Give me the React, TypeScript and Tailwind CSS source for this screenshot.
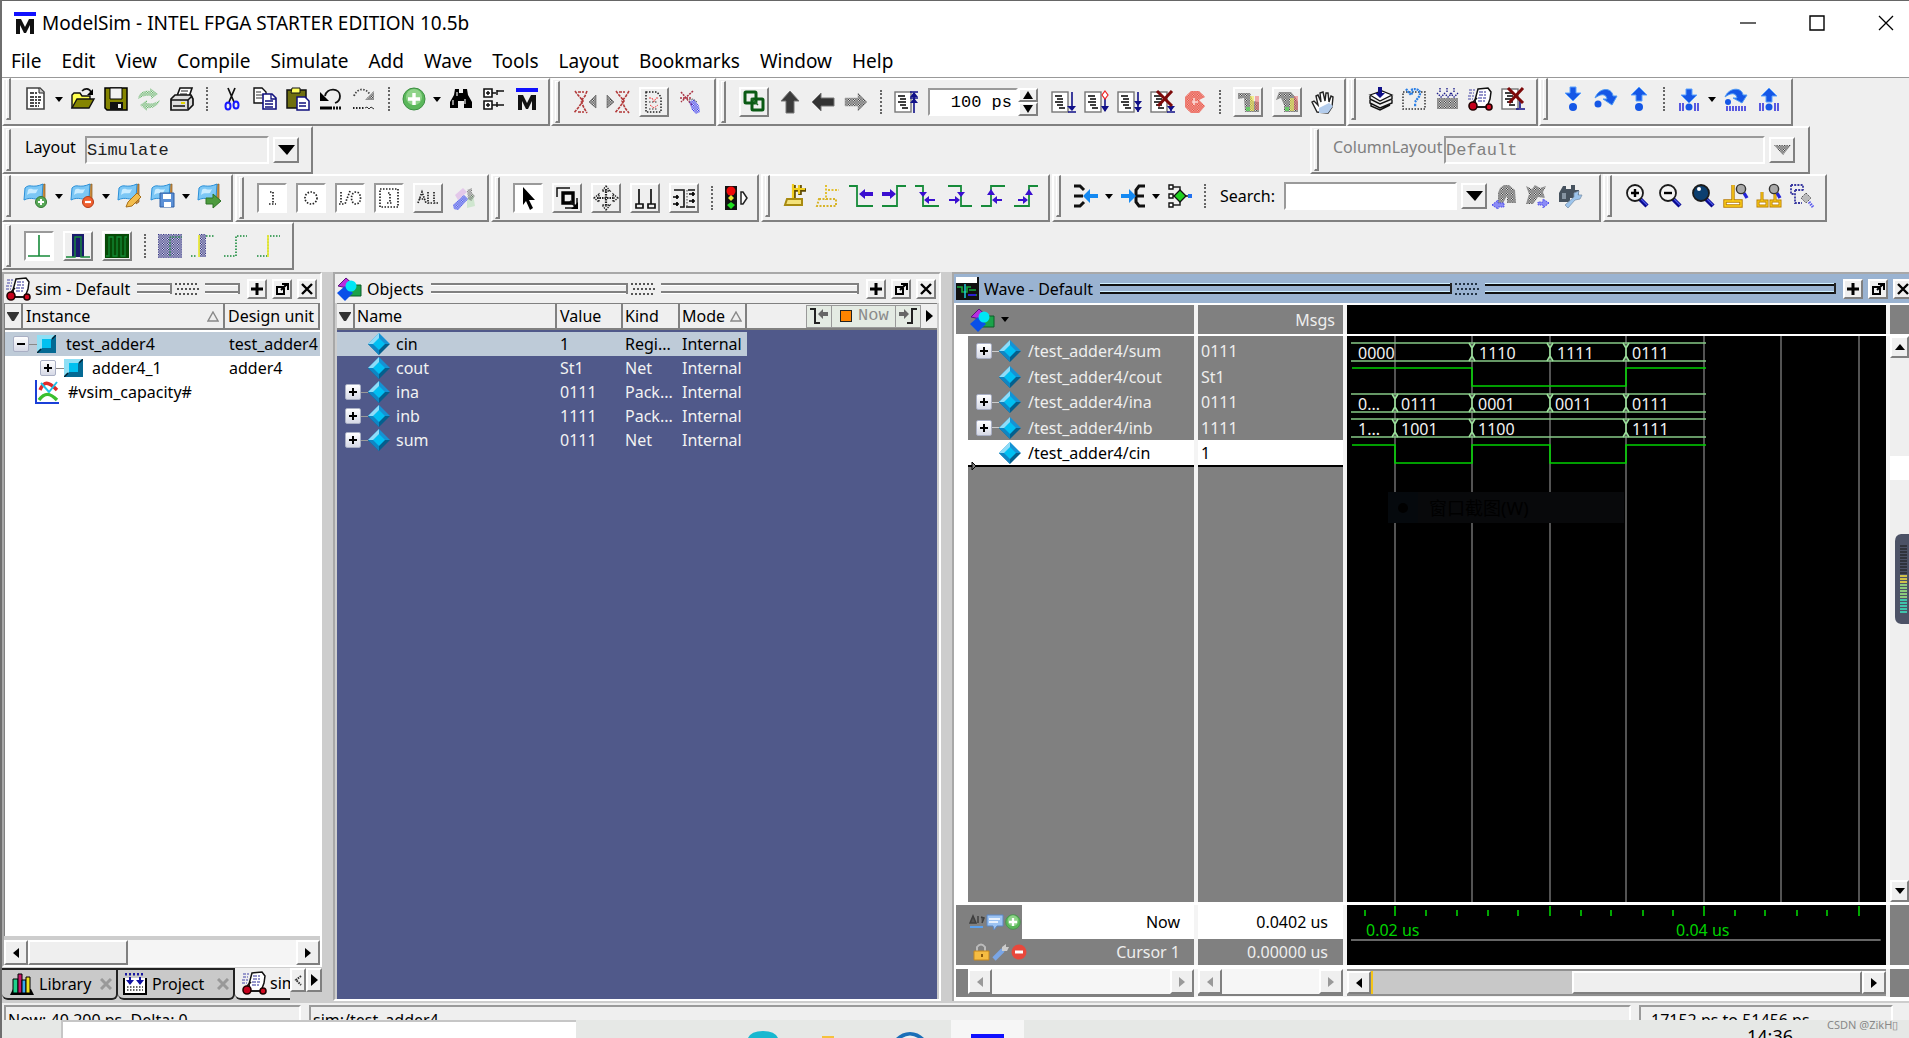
import type { ReactNode } from "react";

const SANS = "font-['Noto_Sans','Noto_Sans_CJK_SC',sans-serif]";
const MONO = "font-['Liberation_Mono',monospace]";
const RAISED = "border-t-2 border-l-2 border-r-2 border-b-2 border-t-white border-l-white border-r-[#808080] border-b-[#808080] bg-[#efefef]";
const SUNKEN = "border-t-2 border-l-2 border-r-2 border-b-2 border-t-[#9a9a9a] border-l-[#9a9a9a] border-r-white border-b-white";

const MENUS = ["File", "Edit", "View", "Compile", "Simulate", "Add", "Wave", "Tools", "Layout", "Bookmarks", "Window", "Help"];

// "|" separator, "v" drop arrow, "[" raised button, "(" pressed button
const BAR_STD = ["new", "v", "open", "save", "refresh", "print", "|", "cut", "copy", "paste", "undo", "redo", "|", "add", "v", "find", "tree", "logo"];
const BAR_EXCL = ["exclLeft", "exclRight", "[exclEdit", "exclClear"];
const BAR_RUN_A = ["[link", "up", "left", "right", "|", "restart"];
const BAR_RUN_B = ["run", "runCont", "runAll", "breakRun", "stop", "|", "[perf", "[mem", "hand"];
const BAR_COMPILE = ["compile", "compileOut", "compileAll", "simulate", "endSim"];
const BAR_STEP = ["stepIn", "stepOver", "stepOut", "|", "stepInC", "v", "stepOverC", "stepOutC"];
const BAR_BOOK = ["bookAdd", "v", "bookDel", "v", "bookEdit", "bookSave", "v", "bookGo"];
const BAR_FILTER = ["(fIn", "(fOut", "(fInOut", "(fInt", "[fAll", "fWrench"];
const BAR_MODE = ["(select", "[zoomMode", "[pan", "[twoCursor", "[edit", "|", "traffic"];
const BAR_CURSOR = ["curAdd", "curDel", "prevTrans", "nextTrans", "prevFall", "nextFall", "prevRise", "nextRise"];
const BAR_EXPAND = ["expandIn", "v", "expandOut", "v", "expandNet", "|"];
const BAR_SEARCH = ["findPrev", "findNext", "findOpts"];
const BAR_ZOOM = ["zoomIn", "zoomOut", "zoomFull", "zoomCur", "zoomTwo", "zoomSel"];
const BAR_DELTA = ["(dOff", "[dOne", "[dAll", "|", "dBlock", "dMid", "dRise", "dEdge"];

const OBJECTS = [
  { name: "cin", value: "1", kind: "Regi...", mode: "Internal", open: false, selected: true },
  { name: "cout", value: "St1", kind: "Net", mode: "Internal", open: false, selected: false },
  { name: "ina", value: "0111", kind: "Pack...", mode: "Internal", open: true, selected: false },
  { name: "inb", value: "1111", kind: "Pack...", mode: "Internal", open: true, selected: false },
  { name: "sum", value: "0111", kind: "Net", mode: "Internal", open: true, selected: false },
];

const SIGNALS = [
  { name: "/test_adder4/sum", value: "0111", bus: true },
  { name: "/test_adder4/cout", value: "St1", bus: false },
  { name: "/test_adder4/ina", value: "0111", bus: true },
  { name: "/test_adder4/inb", value: "1111", bus: true },
  { name: "/test_adder4/cin", value: "1", bus: false },
];

const GRID = [48, 125, 203, 279, 357, 434, 512];

const BUSES = [
  { y: 7, edges: [125, 203, 279], labels: [{ x: 11, t: "0000" }, { x: 132, t: "1110" }, { x: 210, t: "1111" }, { x: 285, t: "0111" }] },
  { y: 58, edges: [48, 125, 203, 279], labels: [{ x: 11, t: "0..." }, { x: 54, t: "0111" }, { x: 131, t: "0001" }, { x: 208, t: "0011" }, { x: 285, t: "0111" }] },
  { y: 83, edges: [48, 125, 279], labels: [{ x: 11, t: "1..." }, { x: 54, t: "1001" }, { x: 131, t: "1100" }, { x: 285, t: "1111" }] },
];

const MINOR = [18, 79, 110, 141, 171, 234, 264, 296, 326, 388, 418, 450, 480];

function Flag({ children }: { children?: ReactNode }) {
  return (
    <>
      <path d="M17 1 L21 0 L21 18 L18 20z" fill="#c98a3c" stroke="#8a5a1c" strokeWidth=".7" />
      <path d="M1 4 C6 -1 8 5 19 0 L18 14 C11 17 8 12 0 16z" fill="#7cc7f5" stroke="#2a8fd8" strokeWidth="1" />
      <path d="M4 6 C7 3 9 7 14 5 L12 9 C8 10 7 8 3 11z" fill="#c8ebff" />
      {children}
    </>
  );
}

function Doc() {
  return (
    <>
      <rect x="1" y="2" width="16" height="20" fill="#fff" stroke="#777" strokeWidth="1.4" />
      <path d="M4 6h7M6 9h6M4 12h8M6 15h6M8 18h6" stroke="#000" strokeWidth="1.6" />
    </>
  );
}

function Lens({ children, fill = "#f4f4f4" }: { children?: ReactNode; fill?: string }) {
  return (
    <>
      <path d="M15 15l7 7" stroke="#0a0a90" strokeWidth="4.4" />
      <path d="M16 15l6 6" stroke="#4a58e8" strokeWidth="1.2" />
      <circle cx="10" cy="9" r="8" fill={fill} stroke="#1b1b1b" strokeWidth="1.8" />
      {children}
    </>
  );
}

function Trolley() {
  return (
    <>
      <path d="M10 2l10-1 3 4-1 7-3 8H8L7 13z" fill="#fff" stroke="#111" strokeWidth="1.5" />
      <path d="M11 5h7M11 8h7M10 11h8M10 14h7" stroke="#7373b9" strokeWidth="1.4" strokeDasharray="4 1" />
      <path d="M1 3h6M1 6h5M0 9h6M0 12h5" stroke="#7d7dc0" strokeWidth="1.3" strokeDasharray="3 1" />
      <path d="M5 15l4-4M9 20h9" stroke="#111" strokeWidth="1.6" />
      <circle cx="5" cy="19" r="4" fill="#c4001c" stroke="#200" strokeWidth="1.6" />
      <circle cx="21" cy="20" r="3" fill="#d40a20" stroke="#200" strokeWidth="1.6" />
    </>
  );
}

const DOWN = "M9 2h6v6h5l-8 8-8-8h5z";
const BLUE = "#1557e6";

const ICONS: Record<string, ReactNode> = {
  new: <><path d="M3 1h13l4 4v17H3z" fill="#fff" stroke="#444" strokeWidth="1.6" /><path d="M15 1v5h5" fill="#ccc" stroke="#222" /><path d="M6 6h7M6 10h11M6 13h11M6 16h10M6 19h9" stroke="#111" strokeWidth="1.6" strokeDasharray="4 1 2 1" /></>,
  open: <><path d="M1 21V8l2-2h6l2 3h8v4" fill="#ffff50" stroke="#111" strokeWidth="1.4" /><path d="M1 21l5-9h17l-5 9z" fill="#858500" stroke="#111" strokeWidth="1.4" /><path d="M11 4c3-3 7-3 9 1" fill="none" stroke="#111" strokeWidth="1.6" /><path d="M22 2v6h-6z" /></>,
  save: <><path d="M1 1h22v22H3l-2-2z" fill="#858500" stroke="#000" strokeWidth="1.5" /><path d="M6 1h12v11H6z" fill="#f1f1f1" stroke="#000" /><path d="M6 15h13v8H6z" fill="#111" /><path d="M14 17h3v4h-3z" fill="#eee" /></>,
  refresh: <><path d="M1 12C2 5 8 3 13 4V1l8 6-7 5V9c-5-1-8 0-13 3z" fill="url(#ditherGreen)" /><path d="M23 13c-2 6-8 9-13 8v3l-7-6 7-5v3c5 1 8 0 13-3z" fill="url(#ditherGreen)" /></>,
  print: <><path d="M7 9L10 1h12l-3 9" fill="#fff" stroke="#111" strokeWidth="1.6" /><path d="M11 4h7M10 7h7" stroke="#222" /><path d="M1 12l4-4h16l2 4v6l-5 5H1z" fill="#ddd" stroke="#111" strokeWidth="1.7" /><path d="M1 13h17l4-4M18 13v9M3 19h12" fill="none" stroke="#111" strokeWidth="1.5" /><path d="M11 15h4v2h-4z" fill="#e5d800" /></>,
  cut: <><path d="M8 1l6 14M15 1L9 15" stroke="#111" strokeWidth="1.7" /><ellipse cx="8" cy="19" rx="2.5" ry="3.6" fill="none" stroke="#1818ff" strokeWidth="2" /><ellipse cx="16" cy="18" rx="2.5" ry="3.6" fill="none" stroke="#1818ff" strokeWidth="2" /></>,
  copy: <><path d="M1 1h8l4 4v11H1z" fill="#fff" stroke="#111" strokeWidth="1.4" /><path d="M3 5h5M3 8h7M3 11h6" stroke="#333" /><path d="M10 7h9l4 4v11H10z" fill="#fff" stroke="#10107e" strokeWidth="1.6" /><path d="M18 7v5h5M12 14h8M12 17h8M12 20h8" fill="none" stroke="#10107e" strokeWidth="1.3" /></>,
  paste: <><path d="M1 3h19v18H1z" fill="#6f6f10" stroke="#111" strokeWidth="1.5" /><path d="M6 1h8v5H5z" fill="#ffff60" stroke="#111" /><path d="M11 10h8l4 4v9H11z" fill="#fff" stroke="#10107e" strokeWidth="1.5" /><path d="M13 16h7M13 19h7" stroke="#10107e" strokeWidth="1.3" /></>,
  undo: <><path d="M6 9C8 0 21 1 21 9c0 4-2 6-5 7" fill="none" stroke="#111" strokeWidth="1.8" /><path d="M1 5v9h9z" /><path d="M1 21h12" stroke="#000" strokeWidth="3" /><path d="M14 21h8" stroke="#111" strokeWidth="3" strokeDasharray="2 1" /></>,
  redo: <><path d="M2 9C5 1 14 0 18 8" fill="none" stroke="#444" strokeWidth="1.8" strokeDasharray="1.5 1.5" /><path d="M22 4v9h-9z" fill="url(#ditherGray)" /><path d="M1 21h12" stroke="#222" strokeWidth="2" strokeDasharray="1.5 1.5" /><path d="M13 21l2-1 2 2 2-2 3 2" fill="none" stroke="#333" /></>,
  add: <><circle cx="12" cy="12" r="11" fill="#5bb75b" stroke="#3c8f42" /><circle cx="12" cy="10" r="8" fill="#8fd38a" /><path d="M12 6v12M6 12h12" stroke="#fff" strokeWidth="3.4" /></>,
  find: <><path d="M6 2h4v4h4V2h4l1 6 4 7v6h-8v-7h-6v7H1v-6l4-7z" /><path d="M4 13v5M16 12v5M8 5v4" stroke="#efefef" strokeWidth="1.2" /></>,
  tree: <><path d="M2 2h8v8H2zM2 14h8v8H2z" fill="#fff" stroke="#111" strokeWidth="1.6" /><path d="M6 4v4M4 6h4M6 16v4M4 18h4M10 6h4M15 3v5M15 4h7M10 18h5M15 15v5M15 18h7" stroke="#111" strokeWidth="1.5" /></>,
  logo: <><path d="M1 1h22v4H1z" fill="#1010ff" /><path d="M3 23V8h5l4 8 4-8h5v15h-4v-9l-4 8h-2l-4-8v9z" fill="#111" /></>,
  exclLeft: <><path d="M2 1l3 4 5 6-5 7-4 5M14 1l-2 5-4 5 3 7 3 5M5 2h6M5 22h6" fill="none" stroke="#b23a3a" strokeWidth="1.6" strokeDasharray="3 1" /><path d="M23 5v13l-7-6z" fill="url(#ditherGray)" stroke="#555" strokeWidth=".6" /></>,
  exclRight: <><path d="M10 1l3 4 5 6-5 7-4 5M23 1l-3 5-4 5 3 7 4 5M13 2h6M13 22h6" fill="none" stroke="#b23a3a" strokeWidth="1.6" strokeDasharray="3 1" /><path d="M1 5v13l7-6z" fill="url(#ditherGray)" stroke="#555" strokeWidth=".6" /></>,
  exclEdit: <><path d="M4 2h11l4 5v15H4z" fill="none" stroke="#222" strokeWidth="1.5" strokeDasharray="1.5 1.5" /><path d="M7 8h3l2 4 2-4h3M8 15l4 3 4-3" fill="none" stroke="#f04040" strokeDasharray="2 1" /><path d="M7 12h9M7 19h9" stroke="#333" strokeDasharray="1.5 1.5" /></>,
  exclClear: <><path d="M3 2l11 13M15 1L3 12M2 8h11" stroke="#a34" strokeWidth="1.5" strokeDasharray="2 1" /><path d="M11 12l5-3 5 7 1 6-4 2-4-4z" fill="url(#ditherBlue)" /><path d="M11 10l4-1 4 3" fill="none" stroke="#555" strokeDasharray="1.5 1" /></>,
  link: <><rect x="3" y="2" width="11" height="11" rx="1" fill="none" stroke="#0a5a14" strokeWidth="3" /><rect x="10" y="9" width="11" height="11" rx="1" fill="none" stroke="#0a5a14" strokeWidth="3" /><path d="M9 8l7 7" stroke="#1b6a24" strokeWidth="1.5" /></>,
  up: <path d="M12 1l9 10h-5v12H8V11H3z" fill="#3b3b3b" stroke="#777" />,
  left: <path d="M1 12l9-9v5h13v8H10v5z" fill="#333" stroke="#777" />,
  right: <path d="M23 12l-9-9v5H1v8h13v5z" fill="url(#ditherGray)" stroke="#999" strokeWidth=".5" />,
  restart: <><Doc /><path d="M16 2h8M16 8h8M20 3v20" stroke="#101088" strokeWidth="1.6" /><path d="M20 2l4 5h-8zM20 8l4 5h-8z" fill="#101088" /></>,
  run: <><Doc /><path d="M21 2v18M17 22h8" stroke="#101088" strokeWidth="1.6" /><path d="M16 16h9l-4 5z" fill="#101088" /></>,
  runCont: <><Doc /><path d="M21 9v12" stroke="#101088" strokeWidth="1.6" /><path d="M21 1l3 4-3 4-3-4z" fill="#fff" stroke="#e22" strokeWidth="1.2" /><path d="M17 16h8l-4 6z" fill="#101088" /></>,
  runAll: <><Doc /><path d="M21 2v20" stroke="#101088" strokeWidth="1.6" /><path d="M17 11h8l-4 5zM17 17h8l-4 5z" fill="#101088" /></>,
  breakRun: <><Doc /><path d="M21 14v7M17 22h8" stroke="#101088" strokeWidth="1.6" /><path d="M17 16h8l-4 5z" fill="#101088" /><path d="M7 1l15 15M22 1L8 16" stroke="#7d0a0a" strokeWidth="3" /></>,
  stop: <><path d="M8 1h8l6 6-6 3 6 6-6 7H8l-6-6V7z" fill="url(#ditherRed)" /><path d="M8 1h8l6 6-6 3 6 6-6 7H8l-6-6V7z" fill="#f0604f" opacity=".45" /><path d="M11 8v7M9 12h6" stroke="#fbdad6" strokeWidth="1.6" /></>,
  perf: <><path d="M2 3h12l3 8 6 1v10H9L8 8 2 9z" fill="url(#ditherGray)" /><path d="M14 6h4v15h-4z" fill="#f6ee50" opacity=".6" /><path d="M19 6h4v14h-4z" fill="#f06060" opacity=".5" /><path d="M10 17h4v4h-4z" fill="#58e058" opacity=".7" /></>,
  mem: <><path d="M1 10l3-8h12l5 6 2 4v10H9v-7L6 8z" fill="url(#ditherGray)" /><path d="M15 8h4v13h-4z" fill="#f6ee50" opacity=".6" /><path d="M19 6h4v14h-4z" fill="#f06060" opacity=".5" /><path d="M10 17h4v4h-4z" fill="#58e058" opacity=".7" /></>,
  hand: <><path d="M6 22L1 12l2-1 4 4-2-9 2-1 3 7-1-9 3-1 2 9 1-8 2 0 1 9 2-6 2 1-1 10-4 6z" fill="#fff" stroke="#222" strokeWidth="1.4" /><path d="M8 18l10-5 4 3-5 7H8z" fill="#b3ccec" /></>,
  compile: <><path d="M1 8l12-4 10 4-12 6z" fill="#fff" stroke="#111" strokeWidth="1.3" /><path d="M1 9v3l10 5 12-5V9M1 13v3l10 5 12-5v-3M2 17v2l9 4 10-5" fill="none" stroke="#111" strokeWidth="1.4" /><path d="M9 0h4v6h3l-5 5-5-5h3z" fill="#101088" /></>,
  compileOut: <><path d="M1 5h22v17H1z" fill="none" stroke="#333" strokeWidth="1.5" strokeDasharray="1.5 1.5" /><path d="M4 2l5 6 2-4M9 3c7-3 12 2 7 8l-3 4M12 18h3" fill="none" stroke="#2c80e6" strokeWidth="2.3" strokeDasharray="2 .8" /></>,
  compileAll: <><path d="M2 11h21v11H2z" fill="url(#ditherGray)" /><path d="M5 1v4M12 1v4M19 1v4M2 6l4 4 4-4M9 6l4 4 4-4M15 6l4 4 4-4" fill="none" stroke="#20208c" strokeWidth="1.4" strokeDasharray="1.5 1" /></>,
  simulate: <Trolley />,
  endSim: <><Doc /><path d="M19 14v7M15 22h9" stroke="#101088" strokeWidth="1.6" /><path d="M7 1l15 15M22 1L8 16" stroke="#7d0a0a" strokeWidth="3" /></>,
  stepIn: <><path d="M9 0h6v6h5l-8 8-8-8h5z" fill={BLUE} stroke="#5aa2ff" /><circle cx="12" cy="20" r="4" fill={BLUE} /></>,
  stepOver: <><path d="M1 11C5 0 18 0 19 9h4l-5 9-9-6h4c-1-6-7-5-12-1z" fill={BLUE} stroke="#4f9bf5" /><circle cx="4" cy="17" r="3.5" fill={BLUE} /></>,
  stepOut: <><path d="M12 0l8 8h-5v6H9V8H4z" fill={BLUE} stroke="#5aa2ff" /><circle cx="12" cy="20" r="4" fill={BLUE} /></>,
  stepInC: <><path d={DOWN} fill={BLUE} stroke="#5aa2ff" /><circle cx="12" cy="20" r="3.5" fill={BLUE} /><path d="M3 16v8M6 16v8M18 16v8M21 16v8" stroke="#3434dc" strokeWidth="1.6" /></>,
  stepOverC: <><path d="M1 10C5 0 18 0 19 8h4l-5 8-9-5h4c-1-6-7-5-12-1z" fill={BLUE} stroke="#4f9bf5" /><circle cx="4" cy="15" r="3" fill={BLUE} /><path d="M3 19v5M6 19v5M9 19v5M12 19v5M15 19v5M18 19v5M21 19v5" stroke="#3434dc" strokeWidth="1.6" /></>,
  stepOutC: <><path d="M12 1l8 8h-5v6H9V9H4z" fill={BLUE} stroke="#5aa2ff" /><circle cx="12" cy="20" r="3.5" fill={BLUE} /><path d="M3 16v8M6 16v8M18 16v8M21 16v8" stroke="#3434dc" strokeWidth="1.6" /></>,
  bookAdd: <Flag><circle cx="17" cy="18" r="5.5" fill="#58a858" stroke="#337a33" /><path d="M17 15v6M14 18h6" stroke="#fff" strokeWidth="2" /></Flag>,
  bookDel: <Flag><circle cx="17" cy="18" r="5.5" fill="#f06030" stroke="#b43c18" /><path d="M14 18h6" stroke="#fff" strokeWidth="2.2" /></Flag>,
  bookEdit: <Flag><path d="M8 23l2-5 9-9 4 4-9 9z" fill="#f3bd4d" stroke="#a6701c" /></Flag>,
  bookSave: <Flag><path d="M9 9h14v14H9z" fill="#5b90d6" stroke="#2f5fa4" /><path d="M12 10h8v5h-8zM13 18h7v5h-7z" fill="#fff" /></Flag>,
  bookGo: <Flag><path d="M8 14h7v-4l8 7-8 7v-4H8z" fill="#4d9b3e" stroke="#2f7426" /></Flag>,
  fIn: <path d="M10 6h3v12M9 18h7" fill="none" stroke="#222" strokeWidth="1.7" strokeDasharray="1.5 1.5" />,
  fOut: <circle cx="12" cy="12" r="6" fill="none" stroke="#222" strokeWidth="1.7" strokeDasharray="1.5 1.5" />,
  fInOut: <path d="M3 6v12M1 18h5M12 5L7 18M18 6c-6 0-6 12 0 12s6-12 0-12" fill="none" stroke="#222" strokeWidth="1.7" strokeDasharray="1.5 1.5" />,
  fInt: <path d="M3 3h18v18H3zM11 7h2v10M10 17h5" fill="none" stroke="#222" strokeWidth="1.7" strokeDasharray="1.5 1.5" />,
  fAll: <path d="M2 17l4-11 4 11M3 13h6M12 6v11h4M18 6v11h4" fill="none" stroke="#222" strokeWidth="1.7" strokeDasharray="1.5 1.2" />,
  fWrench: <><path d="M3 9l8-7 4 4-9 8z" fill="#e3c8ea" /><path d="M15 13l6-5 2 12-8 2z" fill="#cfe6cf" /><path d="M15 4l5-2v5l3 3-4 5-3-2z" fill="url(#ditherGray)" opacity=".7" /><path d="M1 19L12 9l4 4L6 24l-4-1z" fill="url(#ditherBlue)" /><path d="M1 19L12 9l4 4L6 24l-4-1z" fill="#7b90f0" opacity=".4" /></>,
  select: <path d="M7 1l12 13h-6l4 8-3 2-4-9-3 4z" />,
  zoomMode: <><path d="M2 11V2h13M10 22h12V12" fill="none" stroke="#111" strokeWidth="1.5" /><path d="M8 7h10v10H8z" fill="none" stroke="#000" strokeWidth="3.4" /><path d="M15 15l7 7" stroke="#111" strokeWidth="2" /><path d="M23 16v7h-7z" /></>,
  pan: <><path d="M12 3v18M3 12h18" stroke="#222" strokeWidth="2.2" strokeDasharray="1.5 1" /><path d="M12 0l4 5H8zM12 24l4-5H8zM0 12l5-4v8zM24 12l-5-4v8z" fill="none" stroke="#222" strokeWidth="1.3" strokeDasharray="1.5 1" /></>,
  twoCursor: <path d="M6 3v15M18 3v15M3 18h7v4H3zM15 18h7v4h-7z" fill="none" stroke="#111" strokeWidth="1.7" />,
  edit: <><path d="M2 4h10v17H8M16 4h7M14 21h9" fill="none" stroke="#111" strokeWidth="1.6" /><path d="M15 4v17M12 4v17" stroke="#444" strokeDasharray="1.5 1.5" /><path d="M1 11h6M1 18h6M17 8h6M17 15h6M5 9v4M5 16v4M21 6v4M21 13v4" stroke="#000" strokeWidth="1.7" /></>,
  traffic: <><path d="M0 0h12v24H0z" fill="#111" /><circle cx="6" cy="5" r="4.5" fill="#f00a0a" /><path d="M6 9l3 3-3 3-3-3z" fill="#e8e832" /><path d="M6 16l4 3-4 4-4-4z" fill="#20e020" /><path d="M16 6v12h2l4-6-4-6z" fill="#fff" stroke="#222" strokeWidth="1.5" /></>,
  curAdd: <><path d="M11 1v14M11 6h12M17 1v10" stroke="#5f4a00" strokeWidth="3.6" /><path d="M10 0v15M11 5h11M16 1v9" stroke="#f1ce1f" strokeWidth="2.2" /><path d="M4 15h15v6H2z" fill="#f4e27a" stroke="#a88a10" strokeWidth="2" /></>,
  curDel: <><path d="M10 1v15M12 6h11" stroke="#e3c030" strokeWidth="2" strokeDasharray="2 1.5" /><path d="M3 15h17v7H1z" fill="none" stroke="#d7b42a" strokeWidth="2" strokeDasharray="2 1.5" /></>,
  prevTrans: <><path d="M0 2h8v20h16" fill="none" stroke="#178b3a" strokeWidth="1.8" /><path d="M10 10l6-5v3h8v4h-8v3z" fill="#3a0fd0" /></>,
  nextTrans: <><path d="M0 22h15V2h9" fill="none" stroke="#178b3a" strokeWidth="1.8" /><path d="M14 10L8 5v3H0v4h8v3z" fill="#3a0fd0" /></>,
  prevFall: <><path d="M0 2h8v20h16" fill="none" stroke="#178b3a" strokeWidth="1.8" /><path d="M4 8h8l-4 5zM9 16l5-4v3h6v2h-6v3z" fill="#3a0fd0" /></>,
  nextFall: <><path d="M0 2h13v20h11" fill="none" stroke="#178b3a" strokeWidth="1.8" /><path d="M9 8h8l-4 5zM12 16l-5-4v3H1v2h6v3z" fill="#3a0fd0" /></>,
  prevRise: <><path d="M0 22h10V2h14" fill="none" stroke="#178b3a" strokeWidth="1.8" /><path d="M6 11h8l-4-6zM11 16l5-4v3h5v2h-5v3z" fill="#3a0fd0" /></>,
  nextRise: <><path d="M0 22h15V2h9" fill="none" stroke="#178b3a" strokeWidth="1.8" /><path d="M11 11h8l-4-6zM14 16l-5-4v3H4v2h5v3z" fill="#3a0fd0" /></>,
  expandIn: <><path d="M0 2h6l4 4M0 12h9M0 22h6l4-4" fill="none" stroke="#111" strokeWidth="3" /><path d="M9 12l7-7v5h8v4h-8v5z" fill="#1489f2" /></>,
  expandOut: <><path d="M24 2h-6l-3 4v12l3 4h6M15 12h8" fill="none" stroke="#111" strokeWidth="3" /><path d="M15 12L8 5v5H0v4h8v5z" fill="#1489f2" /></>,
  expandNet: <><path d="M4 3h8v18H4M3 12h18" fill="none" stroke="#222" strokeWidth="1.5" /><path d="M1 1h4v4H1zM1 10h4v4H1zM1 19h4v4H1z" fill="#fff" stroke="#111" strokeWidth="1.4" /><path d="M12 6l6 6-6 6-6-6z" fill="#20d020" stroke="#111" strokeWidth="1.3" /><path d="M20 10h4v4h-4z" fill="#2070f0" /></>,
  findPrev: <><path d="M8 4l4-3h5l6 5 1 13h-9v-7l-4 7H6V9z" fill="url(#ditherGray)" /><path d="M0 21l6-5v3h6v4H6v2z" fill="#8b8bf5" stroke="#4646ee" strokeDasharray="1.5 1" /></>,
  findNext: <><path d="M1 2l6 3 3-4 5 3 6-2-3 6 2 6-7-1-5 7H1l3-10z" fill="url(#ditherGray)" /><path d="M24 19l-6-4v3h-5v3h5v3z" fill="#8b8bf5" stroke="#4646ee" strokeDasharray="1.5 1" /></>,
  findOpts: <><path d="M5 2h3v3h5V1h4v5h4v8h-9v4H1v-9z" fill="#46525e" /><path d="M4 9h4v6H4z" fill="#8694a2" /><path d="M7 21l9-8V9l5-2-1 4 4 0-2 4-5 1-7 8z" fill="#9cc4ec" stroke="#7d94ac" strokeWidth=".8" /></>,
  zoomIn: <Lens><path d="M10 5v8M6 9h8" stroke="#000" strokeWidth="2.4" /></Lens>,
  zoomOut: <Lens><path d="M6 9h8" stroke="#000" strokeWidth="2.4" /></Lens>,
  zoomFull: <Lens fill="#0c3f70"><circle cx="8" cy="5" r="2" fill="#fff" /></Lens>,
  zoomCur: <><path d="M9 1v16M1 17h16v5H1z" fill="#fff" stroke="#b97c00" strokeWidth="3.4" /><path d="M9 1v16M1 17h16v5H1z" fill="none" stroke="#ffd21a" strokeWidth="1.4" /><path d="M20 9l3 5" stroke="#2424d8" strokeWidth="3.4" /><circle cx="17" cy="5" r="4.6" fill="#aaa" stroke="#333" strokeWidth="1.4" /></>,
  zoomTwo: <><path d="M5 8v9M1 17h9v5H1zM18 10v7M14 17h9v5h-9z" fill="#fff" stroke="#b97c00" strokeWidth="3" /><path d="M5 8v9M1 17h9v5H1zM18 10v7M14 17h9v5h-9z" fill="none" stroke="#ffd21a" strokeWidth="1.2" /><path d="M20 9l3 5" stroke="#2424d8" strokeWidth="3.4" /><circle cx="17" cy="5" r="4.6" fill="#aaa" stroke="#333" strokeWidth="1.4" /></>,
  zoomSel: <><path d="M1 1h12v5M5 6v13h7M1 1v9h4M5 6h9" fill="none" stroke="#3838a0" strokeWidth="1.8" strokeDasharray="2 1.2" /><path d="M16 9l5 5-5 5-5-5z" fill="#bbb" stroke="#555" strokeDasharray="1.5 1" /><path d="M19 18l4 5" stroke="#5a5aee" strokeWidth="3" strokeDasharray="1.5 1" /></>,
  dOff: <path d="M12 1v21M1 22h22" stroke="#178b3a" strokeWidth="1.6" />,
  dOne: <><path d="M6 0h12v23H6z" fill="#1a1a6e" /><path d="M0 23h9V3h6v20h9" fill="none" stroke="#178b3a" strokeWidth="1.4" /></>,
  dAll: <><path d="M0 0h24v24H0z" fill="#074a07" /><path d="M1 22h3V3h4v19h4V3h4v19h4V3h2" fill="none" stroke="#138a35" strokeWidth="1.3" /></>,
  dBlock: <><path d="M0 0h24v24H0z" fill="url(#ditherNavy)" /><path d="M12 22V3h12" fill="none" stroke="#178b3a" strokeDasharray="2 1" /></>,
  dMid: <><path d="M8 0h7v23H8z" fill="url(#ditherNavy)" /><path d="M0 22h6M15 2h8" stroke="#178b3a" strokeWidth="1.6" strokeDasharray="1.5 1.5" /><path d="M8 1v22" stroke="#e8e83a" strokeWidth="1.8" /></>,
  dRise: <path d="M0 22h12V2h11" fill="none" stroke="#178b3a" strokeWidth="1.6" strokeDasharray="1.5 1.5" />,
  dEdge: <><path d="M0 22h11V2h12" fill="none" stroke="#178b3a" strokeWidth="1.6" strokeDasharray="1.5 1.5" /><path d="M11 1v22" stroke="#e8e83a" strokeWidth="1.8" /></>,
};

function Icon({ name }: { name: string }) {
  return <svg width="24" height="24" viewBox="0 0 24 24" className="shrink-0 overflow-visible" aria-hidden="true">{ICONS[name]}</svg>;
}

function Dithers() {
  const sets = [
    ["ditherGray", "#333"], ["ditherGreen", "#5fb463"], ["ditherBlue", "#2b2bf0"], ["ditherRed", "#e8382a"], ["ditherNavy", "#1c1c78"],
  ];
  return (
    <svg width="0" height="0" className="absolute" aria-hidden="true">
      <defs>
        {sets.map(([id, c]) => (
          <pattern key={id} id={id} width="2.5" height="2.5" patternUnits="userSpaceOnUse">
            <path d="M0 0h1.25v1.25H0zM1.25 1.25h1.25v1.25h-1.25z" fill={c} />
          </pattern>
        ))}
      </defs>
    </svg>
  );
}

function Tools({ items }: { items: string[] }) {
  return (
    <>
      {items.map((it, i) => {
        if (it === "|") return <span key={i} className="w-[17px] shrink-0 flex justify-center"><i className="h-6 border-l-2 border-dotted border-[#666]" /></span>;
        if (it === "v") return <button key={i} aria-label="More" className="w-[14px] shrink-0 flex justify-center"><svg width="8" height="5"><path d="M0 0h8L4 5z" /></svg></button>;
        if (it[0] === "[" || it[0] === "(") {
          const style = it[0] === "[" ? RAISED : `${SUNKEN} bg-white`;
          return (
            <span key={i} className="w-[39px] shrink-0 flex justify-center">
              <button aria-label={it.slice(1)} className={`size-[30px] flex items-center justify-center ${style}`}><Icon name={it.slice(1)} /></button>
            </span>
          );
        }
        return <button key={i} aria-label={it} className="w-[33px] shrink-0 flex justify-center"><Icon name={it} /></button>;
      })}
    </>
  );
}

function Bar({ className = "", children }: { className?: string; children: ReactNode }) {
  return (
    <div className={`h-12 shrink-0 flex items-center border-t-2 border-l-2 border-t-white border-l-white border-r-2 border-b-2 border-r-[#808080] border-b-[#808080] ${className}`}>
      <i className="w-[5px] h-[42px] ml-[2px] mr-2 shrink-0 border-l border-t border-white border-r-2 border-b-2 border-r-[#808080] border-b-[#808080]" />
      {children}
    </div>
  );
}

function DropButton({ muted = false }: { muted?: boolean }) {
  return (
    <button aria-label="Open list" className={`w-[26px] h-[26px] shrink-0 flex items-center justify-center ${RAISED}`}>
      <svg width="17" height="11"><path d="M0 0h17l-8 10z" fill={muted ? "url(#ditherGray)" : "#000"} /></svg>
    </button>
  );
}

function Grip({ dark = false }: { dark?: boolean }) {
  const line = dark ? "bg-[#111] border-t border-[#cfefff]" : "bg-[#808080] border-b border-white";
  const lines = (
    <span className={`flex-1 h-[11px] flex flex-col justify-between border-r-2 ${dark ? "border-[#222]" : "border-[#808080]"}`}>
      <i className={`h-[3px] ${line}`} />
      <i className={`h-[3px] ${line}`} />
    </span>
  );
  const dots = [0, 1, 2, 3, 4, 5];
  return (
    <span className="flex-1 min-w-0 flex items-center gap-[3px] mx-[7px]">
      {lines}
      <svg width="27" height="12" className="shrink-0">
        {[1, 6, 11].map((y, r) => dots.map(d => <rect key={`${r}${d}`} x={d * 4 + (r % 2) * 2} y={y - 1} width="2" height="2" fill={dark ? "#234" : "#555"} />))}
      </svg>
      {lines}
    </span>
  );
}

function PanelHeader({ icon, title, dark = false }: { icon: ReactNode; title: string; dark?: boolean }) {
  const btn = `w-5 h-5 shrink-0 flex items-center justify-center ${RAISED}`;
  return (
    <div className={`h-[29px] shrink-0 flex items-center pl-[2px] ${dark ? "bg-[#9ab3d1] -mr-1" : "bg-[#efefef] pr-[3px]"}`}>
      {icon}
      <h2 className="ml-[5px] text-[16px] leading-5 whitespace-nowrap">{title}</h2>
      <Grip dark={dark} />
      <div className="flex gap-[5px]">
        <button aria-label="Zoom panel" className={btn}><svg width="12" height="12"><path d="M6 0v12M0 6h12" stroke="#000" strokeWidth="3" /></svg></button>
        <button aria-label="Undock" className={btn}><svg width="13" height="13"><path d="M1 5h7v7H1zM5 8l6-6M6 2h6v6" fill="none" stroke="#000" strokeWidth="2" /></svg></button>
        <button aria-label="Close panel" className={btn}><svg width="12" height="12"><path d="M1 1l10 10M11 1L1 11" stroke="#000" strokeWidth="2.4" /></svg></button>
      </div>
    </div>
  );
}

function Shapes() {
  return (
    <svg width="25" height="24" viewBox="0 0 25 24" className="shrink-0" aria-hidden="true">
      <path d="M1 9L9 1l9 8-8 2z" fill="#b92ce0" stroke="#5a1478" />
      <path d="M12 8h12v11H12z" fill="#1aa34a" stroke="#0c5c28" />
      <path d="M8 9l8 7-8 8-8-8z" fill="#0a50e8" />
      <circle cx="14" cy="9" r="5.5" fill="#00e6f5" />
    </svg>
  );
}

function Gem() {
  return (
    <svg width="22" height="22" viewBox="0 0 22 22" className="shrink-0" aria-hidden="true">
      <path d="M11 0l11 11H0z" fill="#1592d4" />
      <path d="M11 0v11H0z" fill="#8fdcf8" />
      <path d="M0 11h22L11 22z" fill="#045f8d" />
      <path d="M0 11h11v11z" fill="#0f86c4" />
      <path d="M11 5l6 6-6 6-6-6z" fill="#00bff2" />
    </svg>
  );
}

function Cube() {
  return (
    <svg width="19" height="18" viewBox="0 0 19 18" className="shrink-0" aria-hidden="true">
      <path d="M0 0h19v18H0z" fill="#0b7fae" />
      <path d="M0 0h19L0 18z" fill="#8fdff5" />
      <path d="M19 0v18H0z" fill="#046a94" />
      <path d="M5 4h9v9H5z" fill="#00c0f0" />
      <path d="M15 4l4-4M0 18l4-4" stroke="#023" strokeWidth="1.5" />
    </svg>
  );
}

function Toggle({ open = false }: { open?: boolean }) {
  return (
    <button aria-label={open ? "Collapse" : "Expand"} className="size-4 shrink-0 rounded-[2px] border border-[#a9afc4] bg-linear-to-b from-white to-[#d6d9e6] flex items-center justify-center">
      <svg width="8" height="8"><path d={open ? "M0 4h8" : "M0 4h8M4 0v8"} stroke="#000" strokeWidth="2" /></svg>
    </button>
  );
}

function FilterMark() {
  return <svg width="12" height="11" className="shrink-0" aria-hidden="true"><path d="M0 1h12v1L7 10H5L0 2z" fill="#333" /></svg>;
}

function SortMark() {
  return <svg width="12" height="11" className="shrink-0" aria-hidden="true"><path d="M6 1l5 9H1z" fill="#eee" stroke="#888" strokeWidth="1.4" /></svg>;
}

function Arrow({ dir, muted = false }: { dir: "l" | "r" | "u" | "d"; muted?: boolean }) {
  const d = { l: "M9 1v10L3 6z", r: "M3 1v10l6-5z", u: "M1 9h10L6 3z", d: "M1 3h10L6 9z" }[dir];
  return <svg width="12" height="12" aria-hidden="true"><path d={d} fill={muted ? "#999" : "#000"} /></svg>;
}

function ScrollButton({ dir, muted = false }: { dir: "l" | "r" | "u" | "d"; muted?: boolean }) {
  return <button aria-label="Scroll" className={`w-6 shrink-0 flex items-center justify-center ${RAISED}`}><Arrow dir={dir} muted={muted} /></button>;
}

function HScroll({ className = "" }: { className?: string }) {
  return (
    <div className={`h-[27px] flex bg-[#f6f6f6] border-b-2 border-[#808080] ${className}`}>
      <ScrollButton dir="l" muted />
      <span className="flex-1" />
      <ScrollButton dir="r" muted />
    </div>
  );
}

const FRAME = "border-2 border-t-[#a8a8a8] border-l-[#a8a8a8] border-r-white border-b-white";
const TH = "h-[26px] p-0 font-normal text-left border-r-2 border-[#808080] border-b-2 bg-[#efefef]";

function SimPanel() {
  return (
    <section className="w-[320px] shrink-0 flex flex-col">
      <div className={`flex-1 min-h-0 flex flex-col ${FRAME} border-r-[#a8a8a8]`}>
        <PanelHeader icon={<Icon name="simulate" />} title="sim - Default" />
        <div className="flex-1 min-h-0 bg-white border-l border-t border-[#808080] overflow-hidden">
          <table className="w-full table-fixed border-separate border-spacing-0 text-[16px] leading-5 whitespace-nowrap">
            <colgroup><col className="w-[220px]" /><col /></colgroup>
            <thead>
              <tr>
                <th className={TH}>
                  <div className="flex items-center h-6">
                    <span className="w-[18px] h-full flex items-center justify-center border-r-2 border-[#808080]"><FilterMark /></span>
                    <span className="flex-1 pl-[3px]">Instance</span>
                    <span className="mr-1"><SortMark /></span>
                  </div>
                </th>
                <th className={`${TH} border-r-0 pl-[3px]`}>Design unit</th>
              </tr>
            </thead>
            <tbody>
              <tr className="h-[2px]"><td colSpan={2} /></tr>
              <tr className="h-6 bg-[#becbd8]">
                <td className="p-0"><div className="flex items-center pl-2"><Toggle open /><i className="w-2 h-px bg-[#888]" /><Cube /><span className="ml-[10px]">test_adder4</span></div></td>
                <td className="p-0 pl-[4px]">test_adder4</td>
              </tr>
              <tr className="h-6">
                <td className="p-0"><div className="flex items-center pl-[35px]"><Toggle /><i className="w-2 h-px bg-[#888]" /><Cube /><span className="ml-[9px]">adder4_1</span></div></td>
                <td className="p-0 pl-[4px]">adder4</td>
              </tr>
              <tr className="h-6">
                <td className="p-0">
                  <div className="flex items-center pl-[30px]">
                    <svg width="24" height="24" viewBox="0 0 24 24" aria-hidden="true">
                      <path d="M1 0v23h23" fill="none" stroke="#1a3fd8" strokeWidth="2" />
                      <path d="M5 10c4-9 8-9 17 0" fill="none" stroke="#e02a2a" strokeWidth="3.4" />
                      <path d="M6 3l8 9 8-10" fill="none" stroke="#20c0e8" strokeWidth="2" />
                      <path d="M4 20c6-8 11-7 18 0" fill="none" stroke="#3bbf2e" strokeWidth="3.4" />
                    </svg>
                    <span className="ml-[9px]">#vsim_capacity#</span>
                  </div>
                </td>
                <td className="p-0" />
              </tr>
            </tbody>
          </table>
        </div>
        <div className="h-[25px] mt-1 shrink-0 flex bg-[#f5f5f5]">
          <ScrollButton dir="l" />
          <span className={`w-[100px] ${RAISED}`} />
          <span className="flex-1" />
          <ScrollButton dir="r" />
        </div>
      </div>
      <div className="h-[36px] pt-[1px] shrink-0 flex bg-[#cdcdcd] text-[16px] leading-5 whitespace-nowrap">
        <button className="w-[116px] h-8 flex items-center pl-2 gap-[5px] bg-[#c9c9c9] border-t-2 border-r-2 border-b-2 border-[#222] rounded-b-md">
          <svg width="24" height="23" viewBox="0 0 24 23" aria-hidden="true">
            <path d="M0 22l3-6h18l3 6z" />
            <path d="M3 6h5v14H3z" fill="#1fd08c" stroke="#000" /><path d="M8 1h4v19H8z" fill="#c8186a" stroke="#000" /><path d="M12 7h4v13h-4z" fill="#38a8f0" stroke="#000" /><path d="M16 4h4v16h-4z" fill="#ece020" stroke="#000" />
          </svg>
          <span className="flex-1 text-left">Library</span>
          <svg width="12" height="12" className="mr-1"><path d="M1 1l10 10M11 1L1 11" stroke="#999" strokeWidth="3" /></svg>
        </button>
        <button className="w-[117px] h-8 flex items-center pl-[5px] gap-[5px] bg-[#c9c9c9] border-t-2 border-r-2 border-b-2 border-[#222] rounded-b-md">
          <svg width="24" height="23" viewBox="0 0 24 23" aria-hidden="true">
            <path d="M1 5v16h22V5" fill="#fff" stroke="#000" strokeWidth="2" />
            <path d="M2 1h20" stroke="#1818a0" strokeWidth="3" strokeDasharray="2 2" /><path d="M3 7h8l-4 5zM13 7h8l-4 5zM6 4h2v4H6zM16 4h2v4h-2z" fill="#1010a0" />
            <path d="M4 14h16M4 17h16" stroke="#333" strokeWidth="1.4" strokeDasharray="1.5 1.5" />
          </svg>
          <span className="flex-1 text-left">Project</span>
          <svg width="12" height="12" className="mr-1"><path d="M1 1l10 10M11 1L1 11" stroke="#999" strokeWidth="3" /></svg>
        </button>
        <button className="flex-1 min-w-0 h-8 flex items-center pl-[7px] gap-[4px] overflow-hidden bg-[#efefef] border-b-2 border-[#222] rounded-bl-md"><Icon name="simulate" /><span>sim</span></button>
        <button aria-label="Previous tab" className={`w-4 h-6 shrink-0 flex items-center justify-center ${RAISED}`}><svg width="8" height="11"><path d="M7 1L2 5l5 5" fill="none" stroke="#333" strokeWidth="2" strokeDasharray="1.5 1" /></svg></button>
        <button aria-label="Next tab" className={`w-4 h-6 shrink-0 flex items-center justify-center ${RAISED}`}><svg width="8" height="12"><path d="M1 0v12l7-6z" /></svg></button>
      </div>
    </section>
  );
}

function ObjectsPanel() {
  return (
    <section className={`w-[608px] shrink-0 flex flex-col ${FRAME} border-r-[#a8a8a8] mb-[2px]`}>
      <PanelHeader icon={<Shapes />} title="Objects" />
      <div className="flex-1 min-h-0 mx-[2px] bg-[#50598a] border-t border-[#808080] overflow-hidden">
        <div className="flex bg-[#efefef]">
          <table className="table-fixed w-[410px] border-separate border-spacing-0 text-[16px] leading-5 whitespace-nowrap">
            <colgroup><col className="w-[220px]" /><col className="w-[66px]" /><col className="w-[57px]" /><col className="w-[67px]" /></colgroup>
            <thead>
              <tr>
                <th className={TH}>
                  <div className="flex items-center h-6">
                    <span className="w-[18px] h-full flex items-center justify-center border-r-2 border-[#808080]"><FilterMark /></span>
                    <span className="pl-[2px]">Name</span>
                  </div>
                </th>
                <th className={`${TH} pl-[3px]`}>Value</th>
                <th className={`${TH} pl-[2px]`}>Kind</th>
                <th className={`${TH} pl-[2px]`}><div className="flex items-center justify-between pr-[3px]">Mode<SortMark /></div></th>
              </tr>
            </thead>
            <tbody className="bg-[#50598a] text-[#f2f2f2]">
              <tr className="h-[2px]"><td colSpan={4} /></tr>
              {OBJECTS.map(o => (
                <tr key={o.name} className={o.selected ? "h-6 bg-[#becbd8] text-black" : "h-6"}>
                  <td className="p-0">
                    <div className="flex items-center pl-2">
                      {o.open ? <Toggle /> : <span className="w-4" />}
                      <i className={o.open ? "w-[7px] h-px bg-[#999]" : "w-[7px]"} />
                      <Gem />
                      <span className="ml-[6px]">{o.name}</span>
                    </div>
                  </td>
                  <td className="p-0 pl-[3px]">{o.value}</td>
                  <td className="p-0 pl-[2px]">{o.kind}</td>
                  <td className="p-0 pl-[2px]">{o.mode}</td>
                </tr>
              ))}
            </tbody>
          </table>
          <div className="flex-1 flex flex-col">
            <div className="h-[26px] flex items-center justify-end border-b-2 border-[#808080]">
              <div className={`h-[23px] flex items-center border border-[#999] bg-[#e4ebe3] text-[#8a8a8a] text-[17px] ${MONO}`}>
                <button aria-label="Previous event" className="w-[25px] h-full flex items-center justify-center border-r border-[#999]"><svg width="18" height="16"><path d="M0 1h5v14h5" fill="none" stroke="#222" strokeWidth="2" /><path d="M8 6l5-5v3h5v4h-5v3z" fill="#666" /></svg></button>
                <button className="w-[63px] h-full flex items-center gap-[6px] pl-2"><i className="size-3 bg-[#ff8400] border border-[#222]" />Now</button>
                <button aria-label="Next event" className="w-[25px] h-full flex items-center justify-center border-l border-[#999]"><svg width="18" height="16"><path d="M8 15h5V1h5" fill="none" stroke="#222" strokeWidth="2" /><path d="M10 6L5 1v3H0v4h5v3z" fill="#666" /></svg></button>
              </div>
              <button aria-label="More columns" className="w-4 flex justify-center"><svg width="7" height="12"><path d="M0 0v12l7-6z" /></svg></button>
            </div>
            <div className="flex-1 bg-[#50598a]" />
          </div>
        </div>
      </div>
    </section>
  );
}

function Bus({ y, edges, labels }: (typeof BUSES)[number]) {
  return (
    <g>
      <path d={`M4 ${y}H359M4 ${y + 18}H359`} stroke="#86c986" strokeWidth="1.4" />
      {edges.map(x => (
        <g key={x} fill="none" stroke="#9be09b" strokeWidth="1.6">
          <path d={`M${x - 3} ${y}l3 5v8l-3 5M${x + 3} ${y}l-3 5v8l3 5`} />
        </g>
      ))}
      {labels.map(l => <text key={l.x} x={l.x} y={y + 16} fill="#f2f2f2" fontSize="16">{l.t}</text>)}
    </g>
  );
}

function Gauge() {
  const bars = Array.from({ length: 23 }, (_, i) => i);
  return (
    <svg width="14" height="90" className="absolute right-0 top-[198px]" aria-hidden="true">
      <path d="M14 0H6Q0 1 0 7v76q0 6 6 7h8z" fill="#4c5266" />
      {bars.map(i => <rect key={i} x="5" y={11 + i * 3} width="7" height="2" fill={i < 10 ? "#30333c" : i < 13 ? "#d0c14a" : i < 18 ? "#8cc97c" : "#3fc4ac"} />)}
    </svg>
  );
}

const COLS = "grid grid-cols-[238px_145px_minmax(0,1fr)_19px] gap-x-[4px]";

function rowHeight(i: number) {
  if (i === 4) return "h-[27px] bg-white text-black border-b-2 border-black";
  return i % 2 ? "h-[25px]" : "h-[26px]";
}

function WavePanel() {
  return (
    <section className="flex-1 min-w-0 flex flex-col overflow-hidden border-l-2 border-t-2 border-[#a8a8a8] mb-[2px] text-[16px] leading-5 whitespace-nowrap">
      <PanelHeader
        dark
        title="Wave - Default"
        icon={
          <svg width="23" height="23" viewBox="0 0 23 23" className="shrink-0" aria-hidden="true">
            <path d="M0 0h23v23H0z" fill="#111" /><path d="M0 0h21v6H0z" fill="#fff" />
            <path d="M1 10h5v5h5v-5h4M12 18h9M13 13h7" fill="none" stroke="#15a83c" strokeWidth="1.6" /><path d="M9 7v14" stroke="#20d8e8" strokeWidth="1.4" /><path d="M12 18h8" stroke="#2a20d0" strokeWidth="2" />
          </svg>
        }
      />
      <div className="flex-1 min-h-0 flex flex-col border-l-2 border-t-2 border-white bg-white pb-1">
        <div className={`${COLS} h-[29px] shrink-0 bg-[#f4f4f4]`}>
          <div className="bg-[#808080] flex items-center pl-[14px]"><Shapes /><button aria-label="Signal view options" className="ml-[6px]"><svg width="8" height="5"><path d="M0 0h8L4 5z" /></svg></button></div>
          <div className="bg-[#808080] flex items-center justify-end pr-2 text-[#eee]">Msgs</div>
          <div className="bg-black" />
          <div className="bg-[#808080]" />
        </div>
        <div className={`${COLS} flex-1 min-h-0 mt-[2px] bg-[#f4f4f4]`}>
          <div className="pl-[12px] bg-white relative">
            <ul className="h-full pt-[2px] bg-[#808080] text-[#eee]">
              {SIGNALS.map((s, i) => (
                <li key={s.name} className={`flex items-center pl-2 ${rowHeight(i)}`}>
                  {s.bus ? <Toggle /> : <span className="w-4" />}
                  <i className={s.bus ? "w-[7px] h-px bg-[#ccc]" : "w-[7px]"} />
                  <Gem />
                  <span className="ml-[7px]">{s.name}</span>
                </li>
              ))}
            </ul>
            <svg width="6" height="10" className="absolute left-[15px] top-[125px]" aria-hidden="true"><path d="M1 1v8l4-4z" fill="#808080" stroke="#000" /></svg>
          </div>
          <ul className="pt-[2px] bg-[#808080] text-[#eee]">
            {SIGNALS.map((s, i) => <li key={s.name} className={`flex items-center pl-[3px] ${rowHeight(i)}`}>{s.value}</li>)}
          </ul>
          <div className="relative bg-black overflow-hidden">
            <svg width="100%" height="100%" className="block" role="img" aria-label="Waveforms">
              {GRID.map(x => <line key={x} x1={x} x2={x} y1="0" y2="100%" stroke="#777" strokeWidth="1.4" />)}
              {BUSES.map(b => <Bus key={b.y} {...b} />)}
              <path d="M5 32H125V50H279V32H359" fill="none" stroke="#00d200" strokeWidth="1.6" />
              <path d="M5 109H48V127H125V109H203V127H279V109H359" fill="none" stroke="#00d200" strokeWidth="1.6" />
            </svg>
            <div className="absolute left-[41px] top-[156px] w-[236px] h-[31px] flex items-center bg-[#08090b] text-black text-[18px]">
              <span className="w-[30px] h-full flex items-center justify-center bg-[#05090d]"><i className="size-[10px] rounded-full bg-black" /></span>
              <span className="ml-[11px]">窗口截图(W)</span>
            </div>
          </div>
          <div className="relative flex flex-col bg-[#efefef]">
            <button aria-label="Scroll up" className={`h-[22px] flex items-center justify-center ${RAISED}`}><Arrow dir="u" /></button>
            <span className="h-[98px]" />
            <span className="h-6 bg-white" />
            <span className="flex-1" />
            <button aria-label="Scroll down" className={`h-[22px] flex items-center justify-center ${RAISED}`}><Arrow dir="d" /></button>
            <Gauge />
          </div>
        </div>
        <div className={`${COLS} h-[60px] shrink-0 mt-[3px] bg-[#f4f4f4]`}>
          <div className="bg-[#808080] flex flex-col">
            <div className="h-[34px] flex">
              <div className="w-[66px] flex items-center pl-[13px] gap-[1px]">
                <svg width="16" height="16" viewBox="0 0 16 16"><path d="M1 9l3-7 3 7zM9 2v7M12 3l3 1-2 5" fill="#555" stroke="#3f3f3f" strokeWidth="1.5" /><path d="M1 13h13" stroke="#5aa0ee" strokeWidth="2" /></svg>
                <svg width="18" height="18" viewBox="0 0 18 18"><path d="M1 2h16v11h-6l-3 4-1-4H1z" fill="#9cc3f2" stroke="#5a86c4" /><path d="M3 6h11M3 9h9" stroke="#fff" strokeWidth="1.6" /></svg>
                <svg width="16" height="16" viewBox="0 0 24 24">{ICONS.add}</svg>
              </div>
              <div className="flex-1 bg-white flex items-center justify-end pr-[14px]">Now</div>
            </div>
            <div className="flex-1 flex items-center pl-[17px] pr-[14px] gap-[2px] text-[#eee]">
              <svg width="17" height="18" viewBox="0 0 17 18"><path d="M4 8V4q4-5 8 0v4" fill="none" stroke="#bbb" strokeWidth="2" /><path d="M1 8h15v9H1z" fill="#f5bc42" stroke="#c4861c" /><path d="M8 11h2v3H8z" fill="#8a5a10" /></svg>
              <svg width="17" height="18" viewBox="0 0 17 18"><path d="M2 16l9-9" stroke="#7aa6e6" strokeWidth="4.6" /><path d="M10 8V4l4-3v3h3l-2 4z" fill="#ccc" /></svg>
              <svg width="16" height="16" viewBox="0 0 16 16"><circle cx="8" cy="8" r="7.5" fill="#e8483c" /><path d="M4 8h8" stroke="#fff" strokeWidth="3" /></svg>
              <span className="flex-1 text-right">Cursor 1</span>
            </div>
          </div>
          <div className="bg-[#808080] flex flex-col text-right">
            <div className="h-[34px] bg-white pr-[15px] leading-[34px]">0.0402 us</div>
            <div className="flex-1 pr-[15px] leading-[26px] text-[#eee]">0.00000 us</div>
          </div>
          <svg width="100%" height="100%" className="block bg-black" role="img" aria-label="Time scale">
            {[48, 203, 357, 512].map(x => <line key={x} x1={x} x2={x} y1="1" y2="11" stroke="#00d200" strokeWidth="1.6" />)}
            {MINOR.map(x => <line key={x} x1={x} x2={x} y1="5" y2="11" stroke="#00d200" strokeWidth="1.6" />)}
            <text x="19" y="31" fill="#00d200" fontSize="16">0.02 us</text>
            <text x="329" y="31" fill="#00d200" fontSize="16">0.04 us</text>
            <line x1="4" x2="99%" y1="35" y2="35" stroke="#888" strokeWidth="1.4" />
          </svg>
          <div className="bg-[#808080]" />
        </div>
        <div className={`${COLS} h-[28px] shrink-0 mt-1 bg-[#f4f4f4]`}>
          <div className="bg-[#808080] pl-[12px]"><HScroll /></div>
          <HScroll />
          <div className="h-[27px] flex bg-[#c8c8c8] border-t-2 border-b-2 border-[#909090]">
            <ScrollButton dir="l" />
            <i className="w-[2px] bg-[#f5c518]" />
            <span className="w-[37%]" />
            <span className={`flex-1 ${RAISED}`} />
            <ScrollButton dir="r" />
          </div>
          <div className="bg-[#808080]" />
        </div>
      </div>
    </section>
  );
}

export default function App() {
  return (
    <div className={`h-screen overflow-hidden flex flex-col bg-[#efefef] text-black border-l-2 border-[#6e6e6e] ${SANS}`}>
      <Dithers />
      <header className="shrink-0 bg-white border-t border-[#666]">
        <div className="h-[43px] flex items-center pl-[11px]">
          <Icon name="logo" />
          <h1 className="ml-[5px] text-[19px] leading-6 flex-1">ModelSim - INTEL FPGA STARTER EDITION 10.5b</h1>
          <button aria-label="Minimize" className="w-[69px] h-full flex items-center justify-center"><svg width="16" height="16"><path d="M0 8h16" stroke="#000" strokeWidth="1.2" /></svg></button>
          <button aria-label="Maximize" className="w-[69px] h-full flex items-center justify-center"><svg width="16" height="16"><path d="M1 1h14v14H1z" fill="none" stroke="#000" strokeWidth="1.4" /></svg></button>
          <button aria-label="Close" className="w-[58px] h-full flex items-center justify-end pr-[15px]"><svg width="16" height="16"><path d="M1 1l14 14M15 1L1 15" stroke="#000" strokeWidth="1.3" /></svg></button>
        </div>
        <nav className="h-[33px] flex items-center pl-[9px] gap-5 text-[19px] leading-6">
          {MENUS.map(m => <button key={m}>{m}</button>)}
        </nav>
      </header>

      <div className="shrink-0 border-t border-[#999]">
        <div className="flex gap-px">
          <Bar className="w-[548px] pb-[6px]"><Tools items={BAR_STD} /></Bar>
          <Bar className="w-[165px]"><Tools items={BAR_EXCL} /></Bar>
          <Bar className="w-[629px]">
            <Tools items={BAR_RUN_A} />
            <input aria-label="Run length" defaultValue="100 ps" className={`w-[90px] h-7 ml-[6px] pr-1 shrink-0 bg-white text-right text-[17px] ${SUNKEN} ${MONO}`} />
            <span className="w-5 mr-2 shrink-0 flex flex-col">
              <button aria-label="Increase" className={`h-[14px] flex items-center justify-center ${RAISED}`}><svg width="10" height="8"><path d="M0 8h10L5 0z" /></svg></button>
              <button aria-label="Decrease" className={`h-[14px] flex items-center justify-center ${RAISED}`}><svg width="10" height="8"><path d="M0 0h10L5 8z" /></svg></button>
            </span>
            <Tools items={BAR_RUN_B} />
          </Bar>
          <Bar className="w-[191px] pb-[6px]"><Tools items={BAR_COMPILE} /></Bar>
          <Bar className="w-[254px] pb-[6px]"><Tools items={BAR_STEP} /></Bar>
        </div>
        <div className="flex justify-between pr-[99px]">
          <Bar className="w-[311px]">
            <label htmlFor="layout" className="ml-[6px] mb-[6px] w-[60px] text-[16px] leading-5">Layout</label>
            <select id="layout" className={`w-[184px] h-7 mr-1 appearance-none text-[17px] text-[#222] ${SUNKEN} ${MONO}`}><option>Simulate</option></select>
            <DropButton />
          </Bar>
          <Bar className="w-[500px]">
            <label htmlFor="columns" className="ml-[6px] mb-[6px] w-[111px] text-[16px] leading-5 text-[#808080]">ColumnLayout</label>
            <select id="columns" disabled className={`w-[321px] h-7 mr-1 appearance-none text-[17px] text-[#808080] opacity-100 ${SUNKEN} ${MONO}`}><option>Default</option></select>
            <DropButton muted />
          </Bar>
        </div>
        <div className="flex gap-[2px]">
          <Bar className="w-[231px] pb-1"><Tools items={BAR_BOOK} /></Bar>
          <Bar className="w-[254px]"><Tools items={BAR_FILTER} /></Bar>
          <Bar className="w-[268px]"><Tools items={BAR_MODE} /></Bar>
          <Bar className="w-[289px] pb-1"><Tools items={BAR_CURSOR} /></Bar>
          <Bar className="w-[549px] pb-1">
            <Tools items={BAR_EXPAND} />
            <label htmlFor="search" className="ml-[7px] w-[64px] shrink-0 text-[16px] leading-5">Search:</label>
            <input id="search" className={`w-[173px] h-7 mr-1 shrink-0 bg-white ${SUNKEN}`} />
            <DropButton />
            <Tools items={BAR_SEARCH} />
          </Bar>
          <Bar className="w-[224px] pb-1"><Tools items={BAR_ZOOM} /></Bar>
        </div>
        <Bar className="w-[292px]"><Tools items={BAR_DELTA} /></Bar>
      </div>

      <main className="flex-1 min-h-0 mt-[2px] flex gap-[11px] bg-[#cdcdcd]">
        <SimPanel />
        <ObjectsPanel />
        <WavePanel />
      </main>

      <footer className="h-[17px] shrink-0 pt-[2px] pl-[2px] pr-4 flex gap-2 text-[16px] leading-5 whitespace-nowrap overflow-hidden">
        <div className={`w-[297px] h-7 pl-[2px] pt-[3px] ${SUNKEN}`}>Now: 40,200 ps&nbsp; Delta: 0</div>
        <div className={`flex-1 h-7 pl-[2px] pt-[3px] ${SUNKEN}`}>sim:/test_adder4</div>
        <div className={`w-[254px] h-7 pl-[10px] pt-[3px] ${SUNKEN}`}>17152 ps to 51456 ps</div>
      </footer>

      <div className="h-[18px] shrink-0 flex bg-[#e6e8e6] overflow-hidden">
        <div className="w-[515px] ml-[59px] bg-white border-t-2 border-l-2 border-[#c6c6c6]" />
        <div className="flex-1 flex items-start pl-[171px]">
          <svg width="32" height="18"><path d="M1 18Q4 11 16 11T31 18z" fill="#18b8d0" /></svg>
          <svg width="20" height="18" className="ml-[40px]"><path d="M3 18v-2h12v2z" fill="#f5c23c" /></svg>
          <svg width="30" height="18" className="ml-[56px]"><path d="M1 18Q7 12 15 12T29 18z" fill="#1a6fb8" /><path d="M7 18q8-5 16 0z" fill="#eee" /></svg>
          <div className="ml-[26px] w-[73px] h-[18px] bg-[#f6f6f6] flex items-end justify-center"><i className="w-[33px] h-1 bg-[#1010ff]" /></div>
        </div>
        <time className="w-[70px] pt-1 text-[18px] leading-6">14:36</time>
        <span className="w-[74px] mr-[18px] pl-[10px] text-[11px] leading-[10px] text-[#888] whitespace-nowrap">CSDN @ZikH▯</span>
      </div>
    </div>
  );
}
